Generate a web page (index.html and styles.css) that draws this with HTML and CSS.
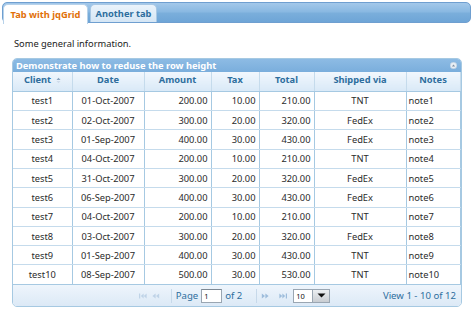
FILE: index.html
```html
<!DOCTYPE html>
<html>
<head>
<meta charset="utf-8">
<link rel="stylesheet" href="styles.css">
</head>
<body>
<div class="tabs">
  <div class="tabbar">
    <div class="tab active">Tab with jqGrid</div>
    <div class="tab">Another tab</div>
  </div>
  <div class="panel">
    <p class="info">Some general information.</p>
    <div class="grid">
      <div class="caption">
        <span>Demonstrate how to reduse the row height</span>
        <svg class="collapse" width="7" height="7" viewBox="0 0 7 7"><circle cx="3.5" cy="3.5" r="3.3" fill="#e8eef4" stroke="#b9cde0" stroke-width="0.6"/><path d="M1.9 4.4 L3.5 2.6 L5.1 4.4 Z" fill="#7d8fa3"/></svg>
      </div>
      <table class="data">
        <colgroup>
          <col class="c1"><col class="c2"><col class="c3"><col class="c4"><col class="c5"><col class="c6"><col class="c7">
        </colgroup>
        <thead>
          <tr>
            <th>Client <svg class="sort" width="5" height="7" viewBox="0 0 5 7"><path d="M0.5 3 L2.5 0.8 L4.5 3 Z" fill="#8aa4bf"/><path d="M0.5 4 L2.5 6.2 L4.5 4 Z" fill="#cfdceb"/></svg></th>
            <th>Date</th><th>Amount</th><th>Tax</th><th>Total</th><th>Shipped via</th><th>Notes</th>
          </tr>
        </thead>
        <tbody>
          <tr><td class="ctr">test1</td><td class="ctr">01-Oct-2007</td><td class="num">200.00</td><td class="num">10.00</td><td class="num">210.00</td><td class="ctr">TNT</td><td class="lft">note1</td></tr>
          <tr><td class="ctr">test2</td><td class="ctr">02-Oct-2007</td><td class="num">300.00</td><td class="num">20.00</td><td class="num">320.00</td><td class="ctr">FedEx</td><td class="lft">note2</td></tr>
          <tr><td class="ctr">test3</td><td class="ctr">01-Sep-2007</td><td class="num">400.00</td><td class="num">30.00</td><td class="num">430.00</td><td class="ctr">FedEx</td><td class="lft">note3</td></tr>
          <tr><td class="ctr">test4</td><td class="ctr">04-Oct-2007</td><td class="num">200.00</td><td class="num">10.00</td><td class="num">210.00</td><td class="ctr">TNT</td><td class="lft">note4</td></tr>
          <tr><td class="ctr">test5</td><td class="ctr">31-Oct-2007</td><td class="num">300.00</td><td class="num">20.00</td><td class="num">320.00</td><td class="ctr">FedEx</td><td class="lft">note5</td></tr>
          <tr><td class="ctr">test6</td><td class="ctr">06-Sep-2007</td><td class="num">400.00</td><td class="num">30.00</td><td class="num">430.00</td><td class="ctr">FedEx</td><td class="lft">note6</td></tr>
          <tr><td class="ctr">test7</td><td class="ctr">04-Oct-2007</td><td class="num">200.00</td><td class="num">10.00</td><td class="num">210.00</td><td class="ctr">TNT</td><td class="lft">note7</td></tr>
          <tr><td class="ctr">test8</td><td class="ctr">03-Oct-2007</td><td class="num">300.00</td><td class="num">20.00</td><td class="num">320.00</td><td class="ctr">FedEx</td><td class="lft">note8</td></tr>
          <tr><td class="ctr">test9</td><td class="ctr">01-Sep-2007</td><td class="num">400.00</td><td class="num">30.00</td><td class="num">430.00</td><td class="ctr">TNT</td><td class="lft">note9</td></tr>
          <tr><td class="ctr">test10</td><td class="ctr">08-Sep-2007</td><td class="num">500.00</td><td class="num">30.00</td><td class="num">530.00</td><td class="ctr">TNT</td><td class="lft">note10</td></tr>
        </tbody>
      </table>
      <div class="pager">
        <div class="pside"></div>
        <div class="pnav">
          <svg class="pico dis" width="8" height="6" viewBox="0 0 8 6"><rect x="0" y="0.5" width="1.2" height="5" /><path d="M1.8 3 L4.6 0.5 L4.6 5.5 Z"/><path d="M4.8 3 L7.6 0.5 L7.6 5.5 Z"/></svg>
          <svg class="pico dis p2" width="8" height="6" viewBox="0 0 8 6"><path d="M0.4 3 L3.6 0.5 L3.6 5.5 Z"/><path d="M4 3 L7.2 0.5 L7.2 5.5 Z"/></svg>
          <span class="sep"></span>
          <span class="ptext">Page</span>
          <span class="pinput">1</span>
          <span class="ptext">of 2</span>
          <span class="sep"></span>
          <svg class="pico" width="8" height="6" viewBox="0 0 8 6"><path d="M0.8 0.5 L4 3 L0.8 5.5 Z"/><path d="M4.4 0.5 L7.6 3 L4.4 5.5 Z"/></svg>
          <svg class="pico p4" width="8" height="6" viewBox="0 0 8 6"><path d="M0.4 0.5 L3.2 3 L0.4 5.5 Z"/><path d="M3.4 0.5 L6.2 3 L3.4 5.5 Z"/><rect x="6.8" y="0.5" width="1.2" height="5"/></svg>
          <span class="psel"><span class="pval">10</span><span class="pbtn"><svg width="9" height="5" viewBox="0 0 9 5"><path d="M0.5 0.5 L8.5 0.5 L4.5 4.5 Z" fill="#111"/></svg></span></span>
        </div>
        <div class="pside pright">View 1 - 10 of 12</div>
      </div>
    </div>
  </div>
</div>
</body>
</html>
```
FILE: styles.css
```css
* { box-sizing: border-box; }
html, body { margin: 0; padding: 0; background: #fff; }
body {
  font-family: "Noto Sans", "DejaVu Sans", sans-serif;
  font-size: 9.3px;
  color: #2b2b2b;
  width: 474px;
  height: 316px;
  overflow: hidden;
}
.tabs { padding: 2px 3px 0 2px; }
.tabbar {
  height: 21px;
  border: 1px solid #6f9fd0;
  border-radius: 5px;
  background: linear-gradient(#a3c8ea 0%, #8ab9e2 45%, #7aaedb 55%, #6ea5d7 100%);
  display: flex;
  align-items: flex-end;
  gap: 2px;
  padding-left: 0;
}
.tab {
  height: 18px;
  border: 1px solid #a9c8e4;
  border-bottom: none;
  border-radius: 5px 5px 0 0;
  font-weight: bold;
  font-size: 9.3px;
  display: flex;
  align-items: center;
  justify-content: center;
  color: #2e6e9e;
  background: linear-gradient(#eaf3fb, #d5e6f5);
  width: 67px;
  margin-bottom: 0;
}
.tab.active {
  width: 85px;
  height: 20px;
  margin-bottom: -2px;
  background: #fff;
  color: #e17009;
  border-color: #b7d2ea;
  padding-bottom: 1px;
}
.panel { padding: 15px 0 0 10px; }
.info { margin: 0 0 8px 2px; line-height: 12px; color: #222; }
.grid {
  width: 450px;
  border: 1px solid #a6c9e2;
  border-radius: 5px;
  overflow: hidden;
  background: #fff;
}
.caption {
  height: 13px;
  background: linear-gradient(#8dbbe4, #7aaedc);
  color: #fff;
  font-weight: bold;
  font-size: 9.3px;
  line-height: 13px;
  padding-left: 3px;
  display: flex;
  align-items: center;
  justify-content: space-between;
  padding-right: 4px;
}
.collapse { display: block; }
.data {
  border-collapse: collapse;
  table-layout: fixed;
  width: 447px;
}
.c1 { width: 59px; }
.c2 { width: 72px; }
.c3 { width: 67px; }
.c4 { width: 48px; }
.c5 { width: 55px; }
.c6 { width: 92px; }
.c7 { width: 54px; }
.data th {
  height: 19px;
  padding: 0 2px 3px;
  background: linear-gradient(#f1f7fd, #d9e9f7);
  color: #2e6e9e;
  font-weight: bold;
  font-size: 9.3px;
  border-right: 1px solid #c5dbec;
  border-bottom: 1px solid #a6c9e2;
  text-align: center;
  white-space: nowrap;
}
.sort { vertical-align: middle; margin-left: 2px; }
.data td {
  height: 19.3px;
  padding: 0 3px;
  border-right: 1px solid #a6c9e2;
  border-bottom: 1px solid #c5dbec;
  white-space: nowrap;
  overflow: hidden;
}
.data tbody tr:first-child td { height: 19.6px; }
.data tbody tr:last-child td { border-bottom: none; }
.ctr { text-align: center; }
.num { text-align: right; }
.lft { text-align: left; padding-left: 2px !important; }
.pager {
  height: 22px;
  border-top: 1px solid #a6c9e2;
  background: linear-gradient(#eef5fc, #dce9f6);
  display: flex;
  align-items: center;
  color: #2e6e9e;
}
.pside { flex: 1; }
.pright { text-align: right; padding-right: 5px; font-size: 9.6px; }
.pnav { display: flex; align-items: center; }
.pico { fill: #9dbcdb; display: block; }
.pico.dis { fill: #bfd3e7; }
.p2 { margin-left: 5px; }
.p4 { margin-left: 10px; }
.sep {
  width: 1px;
  height: 14px;
  background: #c7d9ea;
  margin: 0 4px 0 11px;
}
.sep + .pico { margin-left: 0; }
.ptext { font-size: 9.6px; margin-right: 3px; }
.pinput {
  width: 21px;
  height: 14px;
  border: 1px solid #9aa6b2;
  border-top-color: #7d8893;
  background: #fff;
  color: #111;
  font-size: 7.5px;
  line-height: 12px;
  padding-left: 2px;
  margin-right: 3px;
}
.psel {
  margin-left: 6px;
  width: 37px;
  height: 14px;
  border: 1px solid #9aa6b2;
  background: #fff;
  display: flex;
}
.pval { color: #111; font-size: 7.5px; line-height: 12px; padding-left: 2px; flex: 1; }
.pbtn {
  width: 17px;
  background: linear-gradient(#eceff2, #c9cdd2);
  border-left: 1px solid #9aa6b2;
  display: flex;
  align-items: center;
  justify-content: center;
}
.pbtn svg { display: block; }
```
